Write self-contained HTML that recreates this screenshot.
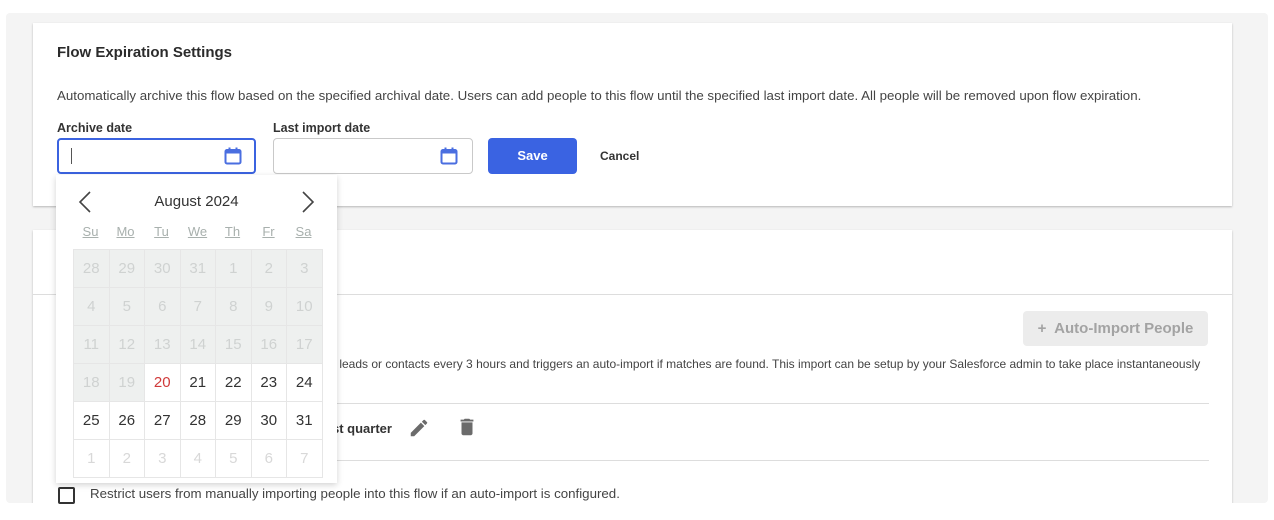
<!DOCTYPE html>
<html><head><style>
*{box-sizing:border-box;margin:0;padding:0}
body{width:1274px;height:520px;background:#fff;font-family:"Liberation Sans",Arial,sans-serif;position:relative;overflow:hidden;color:#333}
.bg{position:absolute;left:6px;top:13px;width:1262px;height:490px;background:#f4f4f4;border-radius:4px;overflow:hidden}
.card{position:absolute;background:#fff;box-shadow:0 1px 2px rgba(0,0,0,.25)}
.a{position:absolute;white-space:nowrap}
.inp{position:absolute;height:36px;border:1px solid #c9c9c9;border-radius:4px;background:#fff}
.cal{position:absolute;background:#fff;box-shadow:0 2px 6px rgba(0,0,0,.18)}
.grid{position:absolute;left:17px;top:74px;border-collapse:collapse}
.grid td{width:35.5px;height:38px;border:1px solid #e6e6e6;text-align:center;font-size:15px;color:#333;padding:0}
.grid td.g{background:#eef0ef;color:#cfd2d1}
.grid td.n{color:#d8d8d8}
.dh{position:absolute;top:224px;font-size:13px;color:#a8b0ad;text-decoration:underline;width:35px;text-align:center}
</style></head><body>
<div class="bg">
 <div class="card" style="left:27px;top:10px;width:1199px;height:183px"></div>
 <div class="card" style="left:27px;top:217px;width:1199px;height:290px">
  <div style="position:absolute;left:0;top:64px;width:100%;height:1px;background:#ddd"></div>
  <div style="position:absolute;left:300px;top:173px;width:876px;height:1px;background:#ddd"></div>
  <div style="position:absolute;left:300px;top:230px;width:876px;height:1px;background:#ddd"></div>
 </div>
</div>
<div class="a" style="left:57px;top:44px;font-size:15px;font-weight:bold;color:#2b2b2b">Flow Expiration Settings</div>
<div class="a" style="left:57px;top:88px;font-size:13.3px;color:#444">Automatically archive this flow based on the specified archival date. Users can add people to this flow until the specified last import date. All people will be removed upon flow expiration.</div>
<div class="a" style="left:57px;top:121px;font-size:12.5px;font-weight:bold;color:#333">Archive date</div>
<div class="a" style="left:273px;top:121px;font-size:12.5px;font-weight:bold;color:#333">Last import date</div>
<div class="inp" style="left:57px;top:138px;width:199px;border:2px solid #3b63e0"><div style="position:absolute;left:12px;top:8px;width:1px;height:16px;background:#555"></div></div>
<div class="inp" style="left:273px;top:138px;width:200px"></div>
<svg style="position:absolute;left:223px;top:146px" width="20" height="20" viewBox="0 0 20 20"><rect x="2.5" y="4" width="15" height="13.5" rx="1.5" fill="none" stroke="#4a6ee0" stroke-width="2"/><rect x="2.5" y="4" width="15" height="3.5" fill="#4a6ee0"/><rect x="5.5" y="1.5" width="2" height="3" fill="#4a6ee0"/><rect x="12.5" y="1.5" width="2" height="3" fill="#4a6ee0"/></svg>
<svg style="position:absolute;left:439px;top:146px" width="20" height="20" viewBox="0 0 20 20"><rect x="2.5" y="4" width="15" height="13.5" rx="1.5" fill="none" stroke="#4a6ee0" stroke-width="2"/><rect x="2.5" y="4" width="15" height="3.5" fill="#4a6ee0"/><rect x="5.5" y="1.5" width="2" height="3" fill="#4a6ee0"/><rect x="12.5" y="1.5" width="2" height="3" fill="#4a6ee0"/></svg>
<div class="a" style="left:488px;top:138px;width:89px;height:36px;background:#3a63e2;border-radius:4px;color:#fff;font-size:13px;font-weight:bold;text-align:center;line-height:36px">Save</div>
<div class="a" style="left:600px;top:149px;font-size:12px;font-weight:bold;color:#333">Cancel</div>

<div class="a" style="left:1023px;top:311px;width:185px;height:35px;background:#ececec;border-radius:4px;color:#a3a3a3;font-size:15px;font-weight:bold;text-align:center;line-height:35px">+&nbsp; Auto-Import People</div>
<div class="a" style="left:332px;top:357px;font-size:12px;color:#444">r leads or contacts every 3 hours and triggers an auto-import if matches are found. This import can be setup by your Salesforce admin to take place instantaneously</div>
<div class="a" style="left:332px;top:421px;font-size:13px;font-weight:bold;color:#333">st quarter</div>
<svg style="position:absolute;left:408px;top:417px" width="22" height="22" viewBox="0 0 24 24"><path fill="#6b6b6b" d="M3 17.25V21h3.75L17.81 9.94l-3.75-3.75L3 17.25zM20.71 7.04a1 1 0 000-1.41l-2.34-2.34a1 1 0 00-1.41 0l-1.83 1.83 3.75 3.75 1.83-1.83z"/></svg>
<svg style="position:absolute;left:456px;top:416px" width="22" height="22" viewBox="0 0 24 24"><path fill="#6b6b6b" d="M6 19c0 1.1.9 2 2 2h8c1.1 0 2-.9 2-2V7H6v12zM19 4h-3.5l-1-1h-5l-1 1H5v2h14V4z"/></svg>
<div class="a" style="left:58px;top:487px;width:17px;height:17px;border:2px solid #333;border-radius:2px"></div>
<div class="a" style="left:90px;top:486px;font-size:13.3px;color:#444">Restrict users from manually importing people into this flow if an auto-import is configured.</div>

<div class="cal" style="left:56px;top:175px;width:281px;height:308px">
 <svg style="position:absolute;left:21px;top:15px" width="16" height="24" viewBox="0 0 16 24"><path d="M13 2L3 12l10 10" fill="none" stroke="#444" stroke-width="1.6"/></svg>
 <svg style="position:absolute;left:244px;top:15px" width="16" height="24" viewBox="0 0 16 24"><path d="M3 2l10 10L3 22" fill="none" stroke="#444" stroke-width="1.6"/></svg>
 <div class="a" style="left:0;width:281px;text-align:center;top:18px;font-size:15px;color:#333">August 2024</div>
 <table class="grid">
  <tr><td class="g">28</td><td class="g">29</td><td class="g">30</td><td class="g">31</td><td class="g">1</td><td class="g">2</td><td class="g">3</td></tr>
  <tr><td class="g">4</td><td class="g">5</td><td class="g">6</td><td class="g">7</td><td class="g">8</td><td class="g">9</td><td class="g">10</td></tr>
  <tr><td class="g">11</td><td class="g">12</td><td class="g">13</td><td class="g">14</td><td class="g">15</td><td class="g">16</td><td class="g">17</td></tr>
  <tr><td class="g">18</td><td class="g">19</td><td style="color:#d03a3a">20</td><td>21</td><td>22</td><td>23</td><td>24</td></tr>
  <tr><td>25</td><td>26</td><td>27</td><td>28</td><td>29</td><td>30</td><td>31</td></tr>
  <tr><td class="n">1</td><td class="n">2</td><td class="n">3</td><td class="n">4</td><td class="n">5</td><td class="n">6</td><td class="n">7</td></tr>
 </table>
</div>
<div class="dh" style="left:73px">Su</div><div class="dh" style="left:108px">Mo</div><div class="dh" style="left:144px">Tu</div><div class="dh" style="left:180px">We</div><div class="dh" style="left:215px">Th</div><div class="dh" style="left:251px">Fr</div><div class="dh" style="left:286px">Sa</div>
</body></html>
